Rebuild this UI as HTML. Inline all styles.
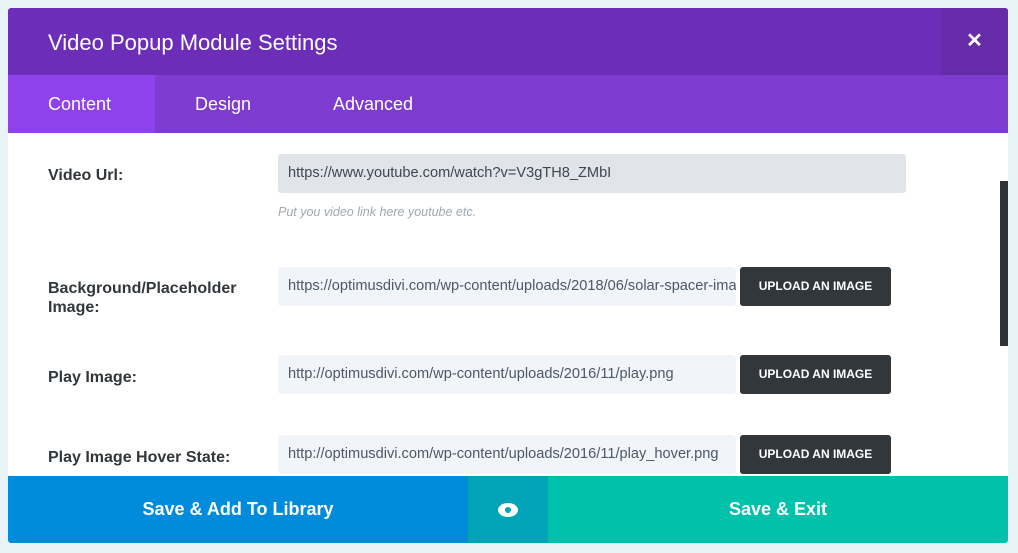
<!DOCTYPE html>
<html><head><style>
body{margin:0;width:1018px;height:553px;background:#e9f4f9;font-family:"Liberation Sans",sans-serif;position:relative;overflow:hidden}
.m{position:absolute;left:8px;top:8px;width:1000px;height:535px;background:#fff;border-radius:3px;overflow:hidden}
.hd{position:absolute;left:0;top:0;width:1000px;height:67px;background:#6c2eb9;color:#fff}
.hd .t{position:absolute;left:40px;top:22px;font-size:22px}
.cl{position:absolute;right:0;top:0;width:67px;height:67px;background:#652ba8;color:#fff;font-size:20px;font-weight:bold;text-align:center;line-height:67px}
.tb{position:absolute;left:0;top:67px;width:1000px;height:58px;background:#7e3bd0;color:#fff;font-size:18px}
.tb span{position:absolute;top:19px}
.act{position:absolute;left:0;top:0;width:147px;height:58px;background:#8f42ec}
.lb{position:absolute;left:40px;font-size:16px;font-weight:bold;color:#32373c;line-height:19px}
.in{position:absolute;left:270px;height:39px;background:#f1f5f9;border-radius:3px;font-size:14.6px;color:#4c5866;line-height:39px;padding-left:10px;box-sizing:border-box;overflow:hidden;white-space:nowrap}
.bt{position:absolute;left:732px;width:151px;height:39px;background:#32373c;border-radius:3px;color:#fff;font-size:12px;font-weight:bold;text-align:center;line-height:39px}
.ft{position:absolute;top:468px;height:67px;color:#fff;font-size:18px;font-weight:bold;text-align:center;line-height:67px}
</style></head><body>
<div class="m">
<div class="hd"><div class="t">Video Popup Module Settings</div><div class="cl">✕</div></div>
<div class="tb"><div class="act"></div><span style="left:40px">Content</span><span style="left:187px">Design</span><span style="left:325px">Advanced</span></div>
<div class="lb" style="top:158px">Video Url:</div>
<div class="in" style="top:146px;width:628px;background:#e1e5ea;color:#3d4752">https://www.youtube.com/watch?v=V3gTH8_ZMbI</div>
<div style="position:absolute;left:270px;top:197px;font-size:12.5px;font-style:italic;color:#a0a8b0">Put you video link here youtube etc.</div>
<div class="lb" style="top:271px">Background/Placeholder<br>Image:</div>
<div class="in" style="top:259px;width:458px">https://optimusdivi.com/wp-content/uploads/2018/06/solar-spacer-image.png</div>
<div class="bt" style="top:259px">UPLOAD AN IMAGE</div>
<div class="lb" style="top:360px">Play Image:</div>
<div class="in" style="top:347px;width:458px">http://optimusdivi.com/wp-content/uploads/2016/11/play.png</div>
<div class="bt" style="top:347px">UPLOAD AN IMAGE</div>
<div class="lb" style="top:440px">Play Image Hover State:</div>
<div class="in" style="top:427px;width:458px">http://optimusdivi.com/wp-content/uploads/2016/11/play_hover.png</div>
<div class="bt" style="top:427px">UPLOAD AN IMAGE</div>
<div style="position:absolute;left:992px;top:173px;width:8px;height:165px;background:#2e3338"></div>
<div class="ft" style="left:0;width:460px;background:#008bdb">Save &amp; Add To Library</div>
<div class="ft" style="left:460px;width:80px;background:#00a3b8"><svg width="22" height="16" viewBox="0 0 22 16" style="vertical-align:middle"><ellipse cx="11" cy="8" rx="10" ry="7" fill="#fff"/><circle cx="11" cy="8" r="3" fill="#00a3b8"/></svg></div>
<div class="ft" style="left:540px;width:460px;background:#00c1a9">Save &amp; Exit</div>
</div>
</body></html>
